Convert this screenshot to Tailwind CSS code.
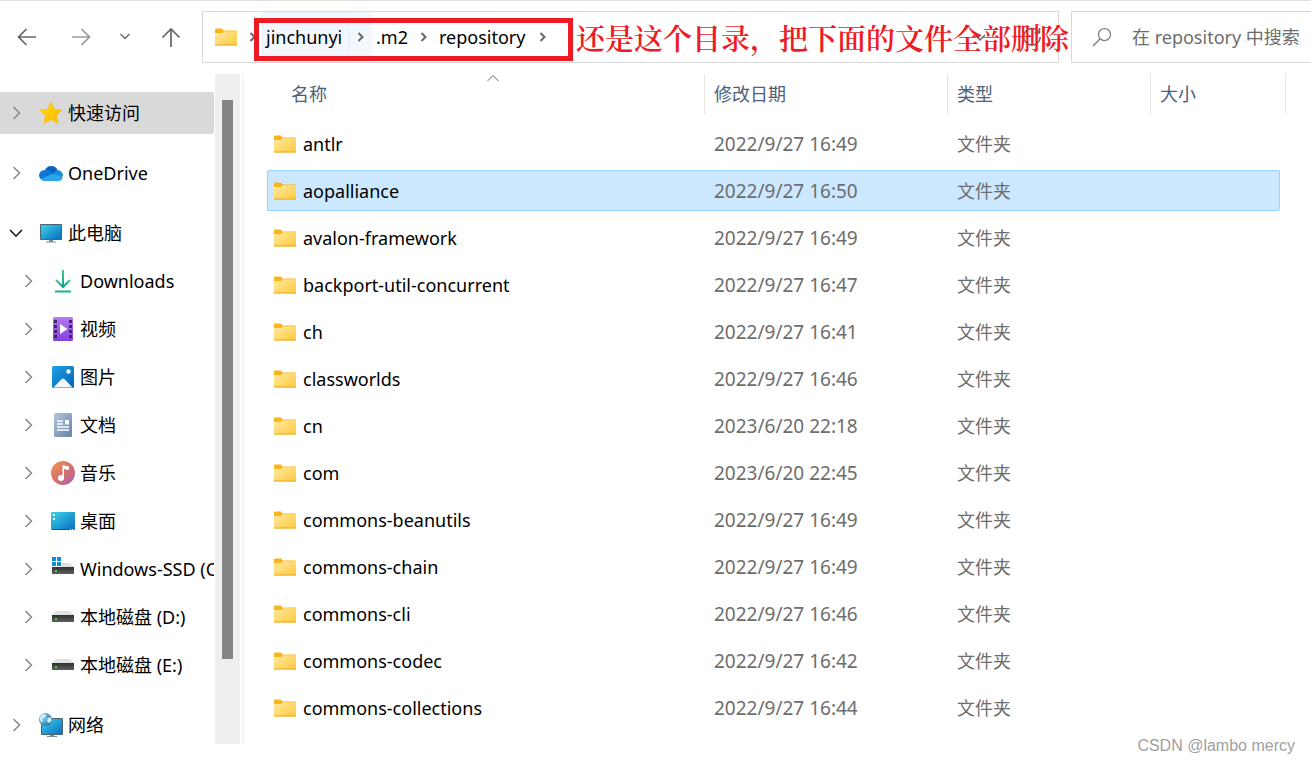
<!DOCTYPE html>
<html lang="zh-CN">
<head>
    <meta charset="UTF-8">
    <meta name="viewport" content="width=device-width, initial-scale=1.0">
    <title>repository</title>
    <script src="https://cdn.jsdelivr.net/npm/@tailwindcss/browser@4"></script>
</head>
<body class="relative flex h-screen flex-col overflow-hidden border-t border-[#dde1dc] bg-white font-['Noto_Sans','Noto_Sans_CJK_SC',sans-serif] text-[18px] leading-6 text-black">
    <!-- Icons -->
    <svg class="absolute h-0 w-0" aria-hidden="true">
        <defs>
            <linearGradient id="g-folder" x1="0" y1="0" x2="1" y2="1"><stop offset="0" stop-color="#ffe9a3"/><stop offset="1" stop-color="#ffca3c"/></linearGradient>
            <linearGradient id="g-screen" x1="0" y1="0" x2="1" y2="1"><stop offset="0" stop-color="#38d3e6"/><stop offset="1" stop-color="#0b6dc4"/></linearGradient>
            <linearGradient id="g-star" x1="0" y1="0" x2="1" y2="1"><stop offset="0" stop-color="#ffdc1a"/><stop offset="1" stop-color="#fdb400"/></linearGradient>
            <linearGradient id="g-down" x1="0" y1="0" x2="0" y2="1"><stop offset="0" stop-color="#3ccb8c"/><stop offset="1" stop-color="#0fa08f"/></linearGradient>
            <linearGradient id="g-video" x1="0" y1="0" x2="0" y2="1"><stop offset="0" stop-color="#b57af0"/><stop offset="1" stop-color="#8440e0"/></linearGradient>
            <linearGradient id="g-pic" x1="0" y1="0" x2="1" y2="1"><stop offset="0" stop-color="#1da2e4"/><stop offset="1" stop-color="#0861b4"/></linearGradient>
            <linearGradient id="g-doc" x1="0" y1="0" x2="1" y2="1"><stop offset="0" stop-color="#b3c6da"/><stop offset="1" stop-color="#6482a5"/></linearGradient>
            <linearGradient id="g-music" x1="0" y1="0" x2="1" y2="1"><stop offset="0" stop-color="#f5924d"/><stop offset=".55" stop-color="#d2706f"/><stop offset="1" stop-color="#a561b8"/></linearGradient>
            <linearGradient id="g-disk" x1="0" y1="0" x2="0" y2="1"><stop offset="0" stop-color="#303030"/><stop offset="1" stop-color="#606060"/></linearGradient>
            <radialGradient id="g-globe" cx=".35" cy=".35" r=".7"><stop offset="0" stop-color="#8fd0ee"/><stop offset="1" stop-color="#2779ab"/></radialGradient>
        </defs>
        <symbol id="folder" viewBox="0 0 22 18">
            <path d="M0 1.500Q0 .5 1 .5H7L8.500 2.500H21.500V8H0Z" fill="#f8b51b"/>
            <path d="M0 5H7L9 3.200H22V17.500H0Z" fill="url(#g-folder)"/>
            <path d="M0 17H22" stroke="#e8a91e"/>
        </symbol>
        <symbol id="right" viewBox="0 0 10 16"><path d="M1.500 2 7.500 8 1.500 14" fill="none" stroke="currentColor" stroke-width="1.500"/></symbol>
        <symbol id="open" viewBox="0 0 14 16"><path d="M1 5 7 11 13 5" fill="none" stroke="currentColor" stroke-width="1.600"/></symbol>
        <symbol id="crumb" viewBox="0 0 8 10"><path d="M1.500 1 5.500 5 1.500 9" fill="none" stroke="currentColor" stroke-width="2"/></symbol>
        <symbol id="star" viewBox="0 0 24 24"><path d="M12 1.500 15.300 8.200 22.700 9.300 17.400 14.500 18.800 22 12 18.500 5.200 22 6.600 14.500 1.300 9.300 8.700 8.200Z" fill="url(#g-star)" stroke="#fdc208" stroke-width="1" stroke-linejoin="round"/></symbol>
        <symbol id="cloud" viewBox="0 0 24 24">
            <path d="M6 9.500A6.800 6.800 0 0 1 18.500 9L14 14 6 11Z" fill="#0a62b8"/>
            <path d="M5 19.500A5 5 0 0 1 5.500 9.200C8 8.200 10 9.200 12 10.500L17 14 5 19.500Z" fill="#0d77d3"/>
            <path d="M14 12.500 18.200 9Q23.500 9.500 24 14.500L22 17Z" fill="#1590df"/>
            <path d="M1.800 18 13.500 12.700 23.800 16.300Q23 20 19.500 20H5Q3 20 1.800 18Z" fill="#2aa6eb"/>
        </symbol>
        <symbol id="pc" viewBox="0 0 24 24">
            <path d="M10 18h4v2.500h3v1H7v-1h3Z" fill="#7d8b96"/>
            <rect x="1" y="3" width="22" height="16" rx="1" fill="#4c6374"/>
            <rect x="2" y="4" width="20" height="14" fill="url(#g-screen)"/>
        </symbol>
        <symbol id="down" viewBox="0 0 24 24">
            <path d="M5 11 12 18 19 11" fill="none" stroke="url(#g-down)" stroke-width="2"/>
            <path d="M11 1h2v17h-2Z" fill="url(#g-down)"/>
            <path d="M4 22.500H20" stroke="#1fb38e" stroke-width="2"/>
        </symbol>
        <symbol id="video" viewBox="0 0 24 24">
            <rect x="2" width="20" height="24" rx="1.500" fill="url(#g-video)"/>
            <path d="M4.500 3V22M19.500 3V22" stroke="#43246e" stroke-width="3" stroke-dasharray="3 2"/>
            <path d="M9 7V17L16.500 12Z" fill="#fff"/>
        </symbol>
        <symbol id="pic" viewBox="0 0 24 24">
            <rect x="1" y="1" width="22" height="22" rx="1.500" fill="url(#g-pic)"/>
            <path d="M2.500 22.500 10.700 14Q12 12.800 13.300 14L21.500 22.500Z" fill="#f3f8fc"/>
            <circle cx="17.500" cy="6.500" r="2.200" fill="#fff"/>
        </symbol>
        <symbol id="doc" viewBox="0 0 24 24">
            <rect x="3" width="18" height="24" rx="1.500" fill="url(#g-doc)"/>
            <path d="M6 8H12M6 11H12M6 14H18M6 17H18" stroke="#fff" stroke-width="1.300"/>
            <path d="M14 7h4v4.500h-4Z" fill="#fff"/>
        </symbol>
        <symbol id="music" viewBox="0 0 24 24">
            <circle cx="12" cy="12" r="12" fill="url(#g-music)"/>
            <circle cx="10" cy="17" r="3" fill="#fff"/>
            <path d="M11.500 17V4L18 5.500V9L13 8V17Z" fill="#fff"/>
        </symbol>
        <symbol id="desktop" viewBox="0 0 24 24">
            <rect y="3" width="24" height="18" rx="1" fill="url(#g-screen)"/>
            <path d="M1 20.500H23" stroke="#12558a"/>
            <path d="M2 5h2v2H2ZM2 9h2v2H2ZM19 20h1v1h-1ZM21 20h1v1h-1Z" fill="#fff"/>
        </symbol>
        <symbol id="disk" viewBox="0 0 24 24">
            <path d="M5 6H19L23 10V11H1V10Z" fill="#dfe1e4"/>
            <path d="M1 10H23V17H1Z" fill="url(#g-disk)"/>
            <path d="M4 13h2v2H4Z" fill="#34e03a"/>
        </symbol>
        <symbol id="ssd" viewBox="0 0 24 24">
            <path d="M5 6H19L23 10V11H1V10Z" fill="#dfe1e4"/>
            <path d="M1 10H23V17H1Z" fill="url(#g-disk)"/>
            <path d="M4 13h2v2H4Z" fill="#34e03a"/>
            <path d="M0 0h11v10H0Z" fill="#fff"/>
            <path d="M1 0h4v4H1ZM6 0h4v4H6ZM1 5h4v4H1ZM6 5h4v4H6Z" fill="#128bd8"/>
        </symbol>
        <symbol id="network" viewBox="0 0 24 24">
            <path d="M11 21h4v2h3v1H8v-1h3Z" fill="#7d8b96"/>
            <rect x="2" y="5" width="22" height="17" rx="1" fill="#4c6374"/>
            <rect x="3" y="6" width="20" height="15" fill="url(#g-screen)"/>
            <circle cx="6.500" cy="6.500" r="6.500" fill="url(#g-globe)"/>
            <path d="M2 2.500Q5 0 7 1.500L6 4 3 6 4 9 2 9Q0 6 2 2.500ZM9 5 12 4.500 12.500 8 10 10 8 8Z" fill="#d5effa"/>
        </symbol>
    </svg>

    <!-- Toolbar -->
    <header class="flex h-[67px] shrink-0 items-start pt-[10px]">
        <div class="flex h-[52px] w-[202px] shrink-0 items-center pl-[17px] text-[#666]">
            <button type="button" aria-label="后退"><svg class="h-5 w-5" viewBox="0 0 20 20" fill="none" stroke="currentColor" stroke-width="1.700"><path d="M19 10H1.500M9.500 2 1.500 10 9.500 18"/></svg></button>
            <button type="button" aria-label="前进" class="ml-[34px] text-[#999]"><svg class="h-5 w-5" viewBox="0 0 20 20" fill="none" stroke="currentColor" stroke-width="1.700"><path d="M1 10H18.500M10.500 2 18.500 10 10.500 18"/></svg></button>
            <button type="button" aria-label="最近浏览的位置" class="ml-7"><svg class="h-3 w-3" viewBox="0 0 12 12" fill="none" stroke="currentColor" stroke-width="1.300"><path d="M1.500 3 6 7.500 10.500 3"/></svg></button>
            <button type="button" aria-label="上移" class="ml-[30px]"><svg class="h-5 w-5" viewBox="0 0 20 20" fill="none" stroke="currentColor" stroke-width="1.700"><path d="M10 20V2M1.500 10.500 10 2 18.500 10.500"/></svg></button>
        </div>

        <div class="relative flex h-[52px] flex-1 items-center border border-[#d9d9d9] pl-3 text-[#666]">
            <svg class="h-[18px] w-[22px] shrink-0"><use href="#folder"/></svg>
            <svg class="ml-3 h-[10px] w-2 shrink-0"><use href="#crumb"/></svg>
            <nav class="ml-[5px] flex h-full items-center" aria-label="路径">
                <a href="#" class="flex h-full w-[87px] items-center border border-[#e5f0fb] bg-[#f3f8fe] pl-[3px] text-black">jinchunyi</a>
                <span class="flex h-full w-[23px] items-center justify-center bg-[#f3f8fe]"><svg class="h-[10px] w-2"><use href="#crumb"/></svg></span>
                <a href="#" class="ml-1 w-11 text-black">.m2</a>
                <svg class="h-[10px] w-2"><use href="#crumb"/></svg>
                <a href="#" class="ml-[11px] w-[100px] text-black">repository</a>
                <svg class="h-[10px] w-2"><use href="#crumb"/></svg>
            </nav>
            <button type="button" aria-label="以前的位置" class="ml-auto"><svg class="h-3 w-3" viewBox="0 0 12 12" fill="none" stroke="currentColor" stroke-width="1.500"><path d="M1 4 6 9 11 4"/></svg></button>
            <button type="button" aria-label="刷新" class="mr-4 ml-9"><svg class="h-5 w-5" viewBox="0 0 20 20" fill="none" stroke="currentColor" stroke-width="1.500"><path d="M17 5.500A8.200 8.200 0 1 0 18.200 10M17.500 1V6H12.500"/></svg></button>
            <!-- Red annotation -->
            <div class="absolute top-[6px] left-[51px] h-[43px] w-[319px] border-[5px] border-[#ed1c24]"></div>
            <p class="absolute top-[6px] left-[373px] font-['Noto_Serif_CJK_SC','Noto_Sans_CJK_SC',serif] text-[29px] leading-10 font-semibold whitespace-nowrap text-[#ed1c24]">还是这个目录，把下面的文件全部删除</p>
        </div>

        <label class="ml-3 flex h-[52px] w-[240px] shrink-0 items-center border border-r-0 border-[#d9d9d9] pl-5">
            <svg class="h-5 w-5 shrink-0 text-[#777]" viewBox="0 0 20 20" fill="none" stroke="currentColor" stroke-width="1.200"><circle cx="12.500" cy="7.500" r="6"/><path d="M8 12 1 19"/></svg>
            <input type="text" aria-label="搜索" placeholder="在 repository 中搜索" class="ml-5 w-full min-w-0 outline-none placeholder:text-[#6d6d6d]">
        </label>
    </header>

    <div class="mb-5 flex min-h-0 flex-1">
        <!-- Navigation pane -->
        <nav id="tree" class="w-[214px] shrink-0 overflow-hidden pt-6 whitespace-nowrap" aria-label="导航窗格"></nav>
        <div class="mt-[6px] ml-px w-[25px] shrink-0 bg-[#efefef] pt-[26px]">
            <div class="mx-auto h-[559px] w-[11px] bg-[#858585]"></div>
        </div>
        <div class="mt-[6px] ml-[2px] w-[2px] shrink-0 bg-[#f5f5f5]"></div>

        <!-- File list -->
        <main class="min-w-0 flex-1 overflow-hidden pr-[25px] pl-[23px]">
            <table class="w-full table-fixed border-separate border-spacing-x-0 border-spacing-y-[6px] text-left">
                <thead class="text-[#4c607a]">
                    <tr>
                        <th class="p-0 pb-[3px] font-normal"><div class="relative flex h-10 items-center border-r border-[#e5e5e5] pl-6">名称<svg class="absolute top-0 left-[220px] h-2 w-3" viewBox="0 0 12 8" fill="none" stroke="#666"><path d="M.5 7 6 1.500 11.500 7"/></svg></div></th>
                        <th class="w-[243px] p-0 pb-[3px] font-normal"><div class="flex h-10 items-center border-r border-[#e5e5e5] pl-[9px]">修改日期</div></th>
                        <th class="w-[203px] p-0 pb-[3px] font-normal"><div class="flex h-10 items-center border-r border-[#e5e5e5] pl-[9px]">类型</div></th>
                        <th class="w-[129px] p-0 pb-[3px] font-normal"><div class="flex h-10 items-center pl-[9px]">大小</div></th>
                        <td class="w-[6px] p-0 pb-[3px]"><div class="h-10 border-r border-[#e5e5e5]"></div></td>
                    </tr>
                </thead>
                <tbody id="files"></tbody>
            </table>
        </main>
    </div>

    <p class="absolute right-4 bottom-2 font-['Liberation_Sans',sans-serif] text-[16px] leading-5 text-[#a0a0a0]">CSDN @lambo mercy</p>

    <script>
        const tree = [
            { icon: 'star', name: '快速访问', selected: true },
            { icon: 'cloud', name: 'OneDrive' },
            { icon: 'pc', name: '此电脑', open: true },
            { icon: 'down', name: 'Downloads', child: true },
            { icon: 'video', name: '视频', child: true },
            { icon: 'pic', name: '图片', child: true },
            { icon: 'doc', name: '文档', child: true },
            { icon: 'music', name: '音乐', child: true },
            { icon: 'desktop', name: '桌面', child: true },
            { icon: 'ssd', name: 'Windows-SSD (C:)', child: true },
            { icon: 'disk', name: '本地磁盘 (D:)', child: true },
            { icon: 'disk', name: '本地磁盘 (E:)', child: true },
            { icon: 'network', name: '网络' }
        ];

        const files = [
            ['antlr', '2022/9/27 16:49'],
            ['aopalliance', '2022/9/27 16:50'],
            ['avalon-framework', '2022/9/27 16:49'],
            ['backport-util-concurrent', '2022/9/27 16:47'],
            ['ch', '2022/9/27 16:41'],
            ['classworlds', '2022/9/27 16:46'],
            ['cn', '2023/6/20 22:18'],
            ['com', '2023/6/20 22:45'],
            ['commons-beanutils', '2022/9/27 16:49'],
            ['commons-chain', '2022/9/27 16:49'],
            ['commons-cli', '2022/9/27 16:46'],
            ['commons-codec', '2022/9/27 16:42'],
            ['commons-collections', '2022/9/27 16:44']
        ];

        document.getElementById('tree').innerHTML = tree.map(item => {
            const place = item.child ? 'mt-[6px] pl-6' : item.selected ? 'rounded-r-xs bg-[#d9d9d9] pl-3' : 'mt-[18px] pl-3';
            const arrow = item.open
                ? '<svg class="-ml-[3px] mr-4 h-4 w-[14px] shrink-0 text-[#222]"><use href="#open"/></svg>'
                : '<svg class="mr-[17px] h-4 w-[10px] shrink-0 text-[#888]"><use href="#right"/></svg>';
            return `<a href="#" class="flex h-[42px] items-center ${place}">${arrow}<svg class="mr-[5px] h-6 w-6 shrink-0"><use href="#${item.icon}"/></svg>${item.name}</a>`;
        }).join('');

        document.getElementById('files').innerHTML = files.map(([name, date]) => {
            const selected = name === 'aopalliance';
            const cell = selected ? 'border-y border-[#99d1ff] bg-[#cce8ff]' : 'border-y border-transparent';
            return `<tr class="h-[41px] text-[#6d6d6d]">
                <td class="${cell} rounded-l-xs border-l p-0 pl-[6px] text-black"><div class="flex items-center gap-[7px]"><svg class="h-[18px] w-[22px] shrink-0"><use href="#folder"/></svg>${name}</div></td>
                <td class="${cell} p-0 pl-[9px] text-[19px]">${date}</td>
                <td class="${cell} p-0 pl-[9px]">文件夹</td>
                <td class="${cell} rounded-r-xs border-r p-0"></td>
            </tr>`;
        }).join('');
    </script>
</body>
</html>
